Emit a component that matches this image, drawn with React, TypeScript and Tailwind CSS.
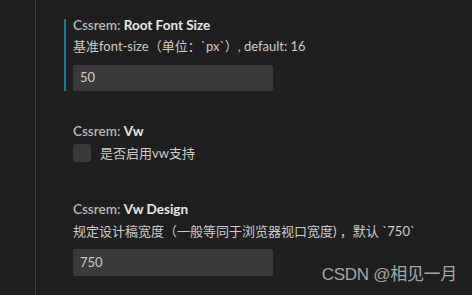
export default function App() {
  return (
    <div
      className="relative flex h-[295px] w-[472px] overflow-hidden bg-[#1f1f1f] text-[13px] text-[#cccccc]"
      style={{ fontFamily: 'Lato, "Noto Sans CJK SC", sans-serif' }}
    >
      <div className="w-[36px] shrink-0 border-r border-[#3a3a3a]" />

      <div className="flex flex-col pl-[28px] pt-[19px]">
        {/* Root Font Size (focused) */}
        <div className="flex">
          <div className="w-[2px] shrink-0 bg-[#147a9e]" />
          <div className="flex flex-col pl-[7px]">
            <div className="text-[13.5px] leading-[13px]">
              <span className="font-semibold text-[#bbbbbb]">Cssrem: </span>
              <span className="font-bold text-[#e8e8e8]">Root Font Size</span>
            </div>
            <div className="mt-[5px] leading-[18px]">基准font-size（单位：`px`）, default: 16</div>
            <div className="mt-[10px] flex h-[26px] w-[200px] items-center rounded-[2px] bg-[#3a3a3a] px-[7px] text-[#cccccc]">
              50
            </div>
          </div>
        </div>

        {/* Vw */}
        <div className="mt-[34px] flex flex-col pl-[9px]">
          <div className="text-[13.5px] leading-[13px]">
            <span className="font-semibold text-[#bbbbbb]">Cssrem: </span>
            <span className="font-bold text-[#e8e8e8]">Vw</span>
          </div>
          <div className="mt-[6px] flex items-center gap-[9px]">
            <div className="h-[18px] w-[18px] rounded-[3px] bg-[#3a3a3a]" />
            <span className="leading-[18px]">是否启用vw支持</span>
          </div>
        </div>

        {/* Vw Design */}
        <div className="mt-[41px] flex flex-col pl-[9px]">
          <div className="text-[13.5px] leading-[13px]">
            <span className="font-semibold text-[#bbbbbb]">Cssrem: </span>
            <span className="font-bold text-[#e8e8e8]">Vw Design</span>
          </div>
          <div className="mt-[6px] leading-[18px]">规定设计稿宽度（一般等同于浏览器视口宽度) ，默认 `750`</div>
          <div className="mt-[9px] flex h-[27px] w-[200px] items-center rounded-[2px] bg-[#3a3a3a] px-[7px]">
            750
          </div>
        </div>
      </div>

      <div
        className="absolute right-[15px] top-[265px] text-[17px] leading-[20px] tracking-[-0.3px] text-[#a6a6a6]"
        style={{ fontFamily: '"Liberation Sans", "Noto Sans CJK SC", sans-serif' }}
      >
        CSDN @相见一月
      </div>
    </div>
  );
}
